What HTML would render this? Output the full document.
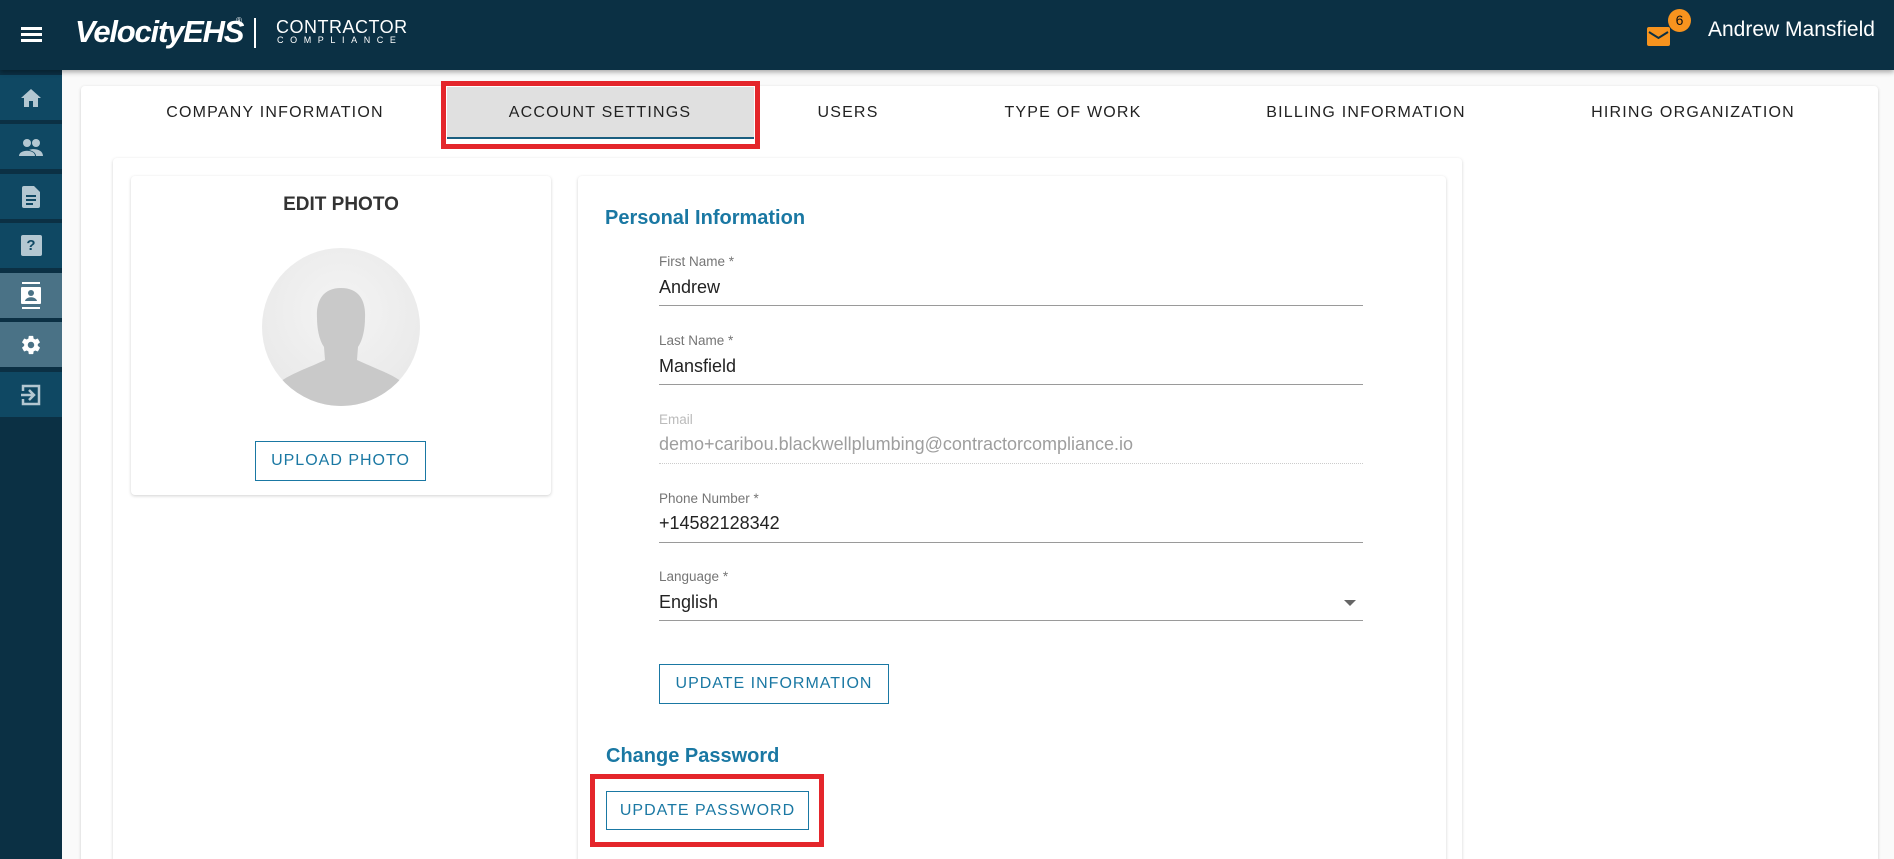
<!DOCTYPE html>
<html style="overflow:hidden;width:1894px;height:859px"><head><meta charset="utf-8"><style>
*{box-sizing:border-box;margin:0;padding:0}
body{width:1894px;height:859px;overflow:hidden;background:#fafafa;font-family:"Liberation Sans",sans-serif;position:relative}
.abs{position:absolute}
.hdr{left:0;top:0;width:1894px;height:70px;background:#0b3044;box-shadow:0 2px 5px rgba(0,0,0,.35);z-index:3}
.side{left:0;top:70px;width:62px;height:789px;background:#0b3044;z-index:2}
.item{position:absolute;left:0;width:62px;height:45px;background:#0f4863;display:flex;align-items:center;justify-content:center}
.item.act{background:#4a7286}
.tab{position:absolute;top:104px;font-size:16px;letter-spacing:1.2px;color:#222;transform:translateX(-50%);white-space:nowrap}
.card{background:#fff;box-shadow:0 1px 3px rgba(0,0,0,.18);border-radius:4px}
.lbl{position:absolute;left:659px;font-size:13.5px;color:#757575}
.val{position:absolute;left:659px;font-size:18px;color:#222}
.line{position:absolute;left:659px;width:704px;height:1px;background:#9a9a9a}
.btn{position:absolute;border:1.5px solid #1a78a3;color:#1a78a3;font-size:16px;letter-spacing:1px;display:flex;align-items:center;justify-content:center;background:#fff}
.red{position:absolute;border:5px solid #e4262b}
h3{position:absolute;font-size:20px;color:#1a78a3;font-weight:bold}
</style></head><body>
<div class="abs hdr">
  <div class="abs" style="left:21px;top:27px;width:21px;height:3px;background:#fff;box-shadow:0 6px 0 #fff,0 12px 0 #fff"></div>
  <div class="abs" style="left:75px;top:14px;color:#fff;font-size:31px;font-weight:bold;font-style:italic;letter-spacing:-1.2px">VelocityEHS</div>
  <div class="abs" style="left:236px;top:16px;color:#fff;font-size:8px">®</div>
  <div class="abs" style="left:254px;top:18px;width:1.5px;height:30px;background:#fff"></div>
  <div class="abs" style="left:276px;top:17px;color:#fff;font-size:18px;letter-spacing:0.5px">CONTRACTOR</div>
  <div class="abs" style="left:277px;top:35px;color:#fff;font-size:9px;letter-spacing:6.6px">COMPLIANCE</div>
  <svg class="abs" style="left:1646px;top:26px" width="26" height="21" viewBox="0 0 26 21"><rect x="1" y="1" width="23" height="19" rx="2" fill="#f7931e"/><path d="M3 6 L12.5 12 L22 6" stroke="#0b3044" stroke-width="2" fill="none"/></svg>
  <div class="abs" style="left:1668px;top:9px;width:23px;height:23px;border-radius:50%;background:#f7931e;color:#111;font-size:14px;text-align:center;line-height:23px">6</div>
  <div class="abs" style="left:1708px;top:18px;color:#fff;font-size:21px">Andrew Mansfield</div>
</div>
<div class="abs side">
  <div class="item" style="top:5px"><svg width="22" height="20" viewBox="0 0 22 20"><path d="M11 1 L21 10 H18 V19 H13 V13 H9 V19 H4 V10 H1 Z" fill="#b3c7d1"/></svg></div>
  <div class="item" style="top:54px"><svg width="24" height="18" viewBox="0 0 24 18"><circle cx="8" cy="5" r="4" fill="#b3c7d1"/><circle cx="17" cy="5" r="4" fill="#b3c7d1"/><path d="M0 18 C0 11 16 11 16 18Z M10 12 C14 10 24 11 24 18 H17 C17 15 14 13 10 12Z" fill="#b3c7d1"/></svg></div>
  <div class="item" style="top:104px"><svg width="18" height="22" viewBox="0 0 18 22"><path d="M2 0 H12 L18 6 V20 a2 2 0 0 1 -2 2 H2 a2 2 0 0 1 -2 -2 V2 a2 2 0 0 1 2 -2Z" fill="#b3c7d1"/><rect x="4" y="9" width="10" height="2" fill="#0f4863"/><rect x="4" y="13" width="10" height="2" fill="#0f4863"/><rect x="4" y="17" width="7" height="2" fill="#0f4863"/></svg></div>
  <div class="item" style="top:153px"><div style="width:21px;height:21px;background:#b3c7d1;border-radius:2px;color:#0f4863;font-size:15px;font-weight:bold;text-align:center;line-height:21px">?</div></div>
  <div class="item act" style="top:203px"><svg width="20" height="28" viewBox="0 0 20 28"><rect x="1" y="0" width="18" height="2" fill="#fff"/><rect x="0" y="5" width="20" height="17" rx="1" fill="#fff"/><circle cx="10" cy="11" r="3" fill="#4a7286"/><path d="M4 19 C5 14 15 14 16 19Z" fill="#4a7286"/><rect x="1" y="25" width="18" height="2" fill="#fff"/></svg></div>
  <div class="item act" style="top:252px"><svg width="22" height="22" viewBox="0 0 24 24"><path fill="#fff" d="M19.4 13c.04-.33.06-.66.06-1s-.02-.67-.06-1l2.1-1.650c.19-.15.24-.42.12-.64l-2-3.46c-.12-.22-.39-.3-.61-.22l-2.490 1c-.52-.4-1.080-.73-1.690-.98l-.38-2.650C14.46 2.18 14.25 2 14 2h-4c-.25 0-.46.18-.49.42l-.38 2.650c-.61.25-1.170.59-1.690.98l-2.490-1c-.23-.09-.49 0-.61.22l-2 3.46c-.13.22-.07.49.12.64L4.57 11c-.04.33-.07.67-.07 1s.03.67.07 1l-2.110 1.650c-.19.15-.24.42-.12.64l2 3.46c.12.22.39.3.61.22l2.490-1c.52.4 1.080.73 1.690.98l.38 2.650c.03.24.24.42.49.42h4c.25 0 .46-.18.49-.42l.38-2.650c.61-.25 1.170-.59 1.690-.98l2.490 1c.23.09.49 0 .61-.22l2-3.460c.12-.22.07-.49-.12-.64L19.4 13zM12 15.5c-1.930 0-3.500-1.570-3.500-3.500s1.570-3.500 3.500-3.500 3.500 1.570 3.500 3.500-1.570 3.500-3.500 3.500z"/></svg></div>
  <div class="item" style="top:302px"><svg width="20" height="22" viewBox="0 0 20 22"><path d="M2 7 V2 H18 V20 H2 V15" stroke="#b3c7d1" stroke-width="2.5" fill="none"/><path d="M0 11 H12 M8 6 L13 11 L8 16" stroke="#b3c7d1" stroke-width="2.5" fill="none"/></svg></div>
</div>

<div class="abs card" style="left:81px;top:86px;width:1797px;height:790px"></div>
<div class="tab" style="left:275px">COMPANY INFORMATION</div>
<div class="red" style="left:441px;top:81px;width:319px;height:68px"></div>
<div class="abs" style="left:447px;top:87px;width:307px;height:52px;background:#e0e0e0;border-bottom:2px solid #1b5f80"></div>
<div class="tab" style="left:600px">ACCOUNT SETTINGS</div>
<div class="tab" style="left:848px">USERS</div>
<div class="tab" style="left:1073px">TYPE OF WORK</div>
<div class="tab" style="left:1366px">BILLING INFORMATION</div>
<div class="tab" style="left:1693px">HIRING ORGANIZATION</div>

<div class="abs card" style="left:113px;top:158px;width:1349px;height:720px"></div>
<div class="abs card" style="left:131px;top:176px;width:420px;height:319px"></div>
<div class="abs" style="left:131px;top:194px;width:420px;text-align:center;font-size:19px;font-weight:bold;color:#333">EDIT PHOTO</div>
<div class="abs" style="left:262px;top:248px;width:158px;height:158px;border-radius:50%;background:radial-gradient(circle at 50% 40%,#f4f4f4,#e6e6e6);overflow:hidden">
  <svg width="158" height="158" viewBox="0 0 158 158"><path d="M79 40 C98 40 104 54 103 70 C103 80 101 92 96 99 L95 112 C112 120 130 126 140 134 L140 158 H18 L18 134 C28 126 46 120 63 112 L62 99 C57 92 55 80 55 70 C54 54 60 40 79 40Z" fill="#c9c9c9"/></svg>
</div>
<div class="btn" style="left:255px;top:441px;width:171px;height:40px">UPLOAD PHOTO</div>

<div class="abs card" style="left:578px;top:176px;width:868px;height:700px"></div>
<h3 style="left:605px;top:207px">Personal Information</h3>
<div class="lbl" style="top:254px">First Name *</div><div class="val" style="top:277px">Andrew</div><div class="line" style="top:305px"></div>
<div class="lbl" style="top:333px">Last Name *</div><div class="val" style="top:356px">Mansfield</div><div class="line" style="top:384px"></div>
<div class="lbl" style="top:412px;color:#bbb">Email</div><div class="val" style="top:434px;color:#9e9e9e">demo+caribou.blackwellplumbing@contractorcompliance.io</div><div class="line" style="top:463px;background:none;border-top:1px dotted #ccc"></div>
<div class="lbl" style="top:491px">Phone Number *</div><div class="val" style="top:513px">+14582128342</div><div class="line" style="top:542px"></div>
<div class="lbl" style="top:569px">Language *</div><div class="val" style="top:592px">English</div><div class="line" style="top:620px"></div>
<div class="abs" style="left:1344px;top:600px;width:0;height:0;border-left:6px solid transparent;border-right:6px solid transparent;border-top:6px solid #666"></div>
<div class="btn" style="left:659px;top:664px;width:230px;height:40px">UPDATE INFORMATION</div>
<h3 style="left:606px;top:745px">Change Password</h3>
<div class="red" style="left:590px;top:774px;width:234px;height:73px"></div>
<div class="btn" style="left:606px;top:791px;width:203px;height:39px">UPDATE PASSWORD</div>
</body></html>
